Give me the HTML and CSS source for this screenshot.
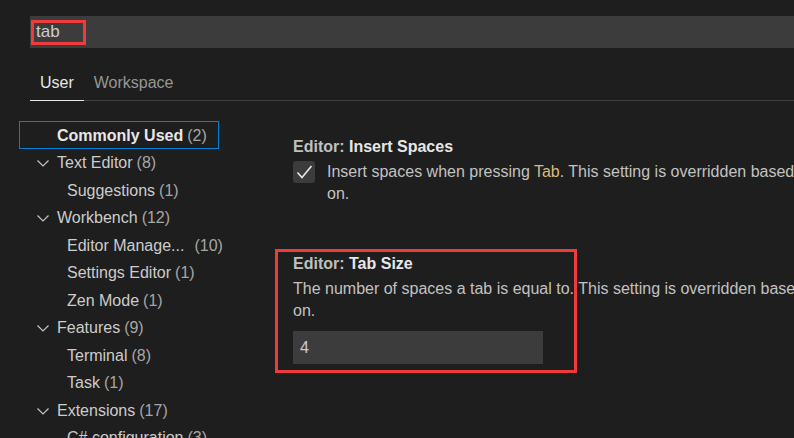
FILE: index.html
```html
<!DOCTYPE html>
<html>
<head>
<meta charset="utf-8">
<link rel="stylesheet" href="styles.css">
</head>
<body>
<div class="page">
  <div class="search">
    <span class="search-text">tab</span>
    <span class="mark mark-search"></span>
  </div>
  <div class="tabs">
    <div class="tab active">User</div>
    <div class="tab">Workspace</div>
  </div>
  <div class="main">
    <div class="tree">
      <div class="row top focused"><span class="chev-space"></span><span class="label bold">Commonly Used</span><span class="count">(2)</span></div>
      <div class="row top"><span class="chev"><svg viewBox="0 0 14 14" width="14" height="14"><path d="M1.5 4.5 L7 10 L12.5 4.5" fill="none" stroke="#c5c5c5" stroke-width="1.2"/></svg></span><span class="label">Text Editor</span><span class="count">(8)</span></div>
      <div class="row child"><span class="label">Suggestions</span><span class="count">(1)</span></div>
      <div class="row top"><span class="chev"><svg viewBox="0 0 14 14" width="14" height="14"><path d="M1.5 4.5 L7 10 L12.5 4.5" fill="none" stroke="#c5c5c5" stroke-width="1.2"/></svg></span><span class="label">Workbench</span><span class="count">(12)</span></div>
      <div class="row child"><span class="label">Editor Manage...</span><span class="count wide">(10)</span></div>
      <div class="row child"><span class="label">Settings Editor</span><span class="count">(1)</span></div>
      <div class="row child"><span class="label">Zen Mode</span><span class="count">(1)</span></div>
      <div class="row top"><span class="chev"><svg viewBox="0 0 14 14" width="14" height="14"><path d="M1.5 4.5 L7 10 L12.5 4.5" fill="none" stroke="#c5c5c5" stroke-width="1.2"/></svg></span><span class="label">Features</span><span class="count">(9)</span></div>
      <div class="row child"><span class="label">Terminal</span><span class="count">(8)</span></div>
      <div class="row child"><span class="label">Task</span><span class="count">(1)</span></div>
      <div class="row top"><span class="chev"><svg viewBox="0 0 14 14" width="14" height="14"><path d="M1.5 4.5 L7 10 L12.5 4.5" fill="none" stroke="#c5c5c5" stroke-width="1.2"/></svg></span><span class="label">Extensions</span><span class="count">(17)</span></div>
      <div class="row child"><span class="label">C# configuration</span><span class="count">(3)</span></div>
    </div>
    <div class="pane">
      <div class="setting first">
        <div class="title"><span class="cat">Editor: </span><span class="name">Insert Spaces</span></div>
        <div class="check-row">
          <div class="checkbox"><svg viewBox="0 0 22 22" width="22" height="22"><path d="M4.5 11.5 L9 16.5 L18.5 5" fill="none" stroke="#e8e8e8" stroke-width="1.6"/></svg></div>
          <div class="desc">
            <div class="line">Insert spaces when pressing <span class="code">Tab</span>. This setting is overridden based on the file contents when Editor: Detect Indentation is</div>
            <div class="line">on.</div>
          </div>
        </div>
      </div>
      <div class="setting second">
        <div class="title"><span class="cat">Editor: </span><span class="name">Tab Size</span></div>
        <div class="desc">
          <div class="line">The number of spaces a tab is equal to. This setting is overridden based on the file contents when Editor: Detect Indentation is</div>
          <div class="line">on.</div>
        </div>
        <div class="input">4</div>
        <span class="mark mark-setting"></span>
      </div>
    </div>
  </div>
</div>
</body>
</html>
```
FILE: styles.css
```css
html, body {
  margin: 0;
  padding: 0;
  overflow: hidden;
  background: #1e1e1e;
  width: 794px;
  height: 438px;
}
body {
  font-family: "Liberation Sans", Arial, sans-serif;
  font-size: 16px;
  color: #cccccc;
}
.page {
  padding-top: 16px;
}
.search {
  position: relative;
  margin-left: 30px;
  height: 32px;
  background: #3c3c3c;
  display: flex;
  align-items: center;
  padding-left: 6px;
}
.search-text {
  color: #cccccc;
  font-size: 17px;
}
.mark {
  position: absolute;
  border: 3px solid #ef3b3b;
  box-sizing: border-box;
}
.mark-search {
  left: 1px;
  top: 4px;
  width: 55px;
  height: 25px;
}
.tabs {
  display: flex;
  margin: 17px 0 0 30px;
  border-bottom: 1px solid #404040;
}
.tab {
  padding: 0 10px;
  height: 35px;
  line-height: 35px;
  margin-bottom: -1px;
  border-bottom: 1px solid transparent;
  color: #969696;
}
.tab.active {
  color: #e7e7e7;
  border-bottom-color: #e7e7e7;
}
.main {
  display: flex;
  margin-top: 20px;
}
.tree {
  margin-left: 19px;
  width: 200px;
  flex: none;
}
.row {
  height: 27.5px;
  display: flex;
  align-items: center;
  box-sizing: border-box;
  white-space: nowrap;
  padding-top: 2px;
}
.row.top {
  padding-left: 17px;
}
.row.child {
  padding-left: 48px;
}
.row.focused {
  border: 1px solid #007fd4;
  padding-left: 16px;
}
.chev, .chev-space {
  width: 21px;
  flex: none;
  display: flex;
  align-items: center;
}
.label {
  color: #cccccc;
}
.label.bold {
  font-weight: bold;
  color: #e7e7e7;
}
.count {
  color: #a6a6a6;
  margin-left: 4px;
}
.count.wide {
  margin-left: 10px;
}
.pane {
  margin-left: 56px;
  padding-top: 11px;
  flex: none;
  width: 1000px;
}
.setting {
  position: relative;
  padding: 4px 18px 9px 18px;
}
.setting.second {
  margin-top: 35px;
}
.title {
  line-height: 22px;
  font-weight: bold;
}
.cat {
  color: #c0c0c0;
}
.name {
  color: #e7e7e7;
}
.line {
  line-height: 22px;
  white-space: nowrap;
  color: #c2c2c2;
}
.code {
  color: #d7ba7d;
}
.check-row {
  display: flex;
  margin-top: 3px;
  gap: 12px;
}
.checkbox {
  width: 22px;
  height: 22px;
  background: #3c3c3c;
  border-radius: 3px;
  flex: none;
}
.checkbox svg {
  display: block;
}
.second .desc {
  margin-top: 3px;
}
.input {
  margin-top: 9px;
  width: 250px;
  height: 33px;
  box-sizing: border-box;
  background: #3c3c3c;
  padding-left: 7px;
  line-height: 33px;
  color: #cccccc;
}
.mark-setting {
  left: 0;
  top: 0;
  width: 302px;
  height: 124px;
}
```
